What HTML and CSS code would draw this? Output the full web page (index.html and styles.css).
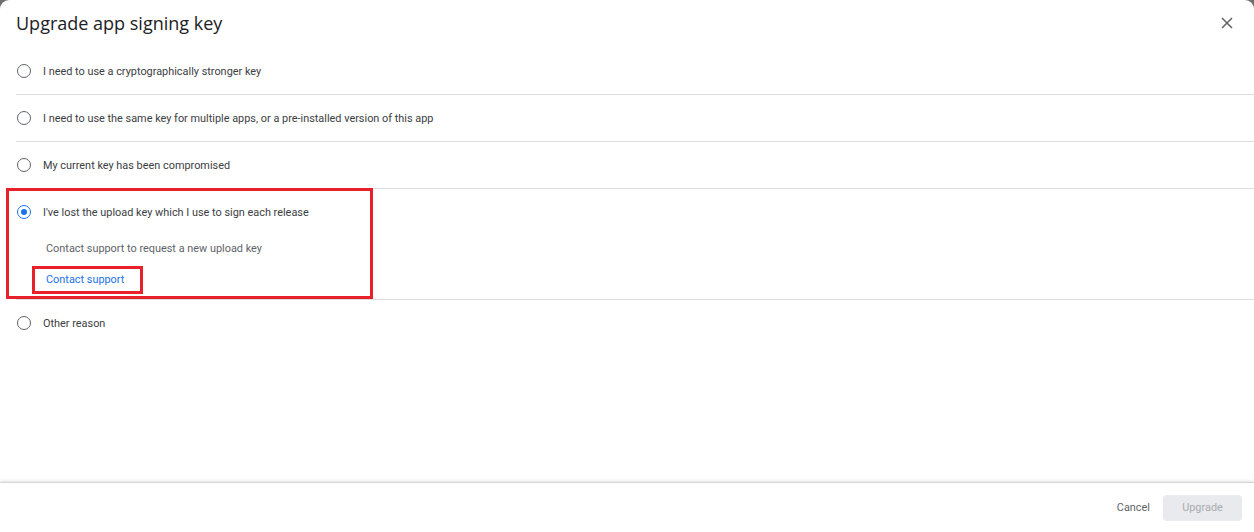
FILE: index.html
```html
<!DOCTYPE html>
<html lang="en">
<head>
    <meta charset="UTF-8">
    <meta name="viewport" content="width=device-width, initial-scale=1.0">
    <title>Upgrade app signing key</title>
    <link rel="stylesheet" href="styles.css">
</head>
<body>
    <div class="dialog">
        <div class="dialog-header">
            <h1 class="dialog-title">Upgrade app signing key</h1>
            <button class="close-btn" aria-label="Close">
                <svg width="12" height="12" viewBox="0 0 12 12">
                    <path d="M1 1 L11 11 M11 1 L1 11" stroke="#5f6368" stroke-width="1.5" fill="none"/>
                </svg>
            </button>
        </div>

        <ul class="options">
            <li class="option">
                <label class="option-row">
                    <span class="radio"></span>
                    <span class="option-label">I need to use a cryptographically stronger key</span>
                </label>
            </li>
            <li class="option">
                <label class="option-row">
                    <span class="radio"></span>
                    <span class="option-label">I need to use the same key for multiple apps, or a pre-installed version of this app</span>
                </label>
            </li>
            <li class="option">
                <label class="option-row">
                    <span class="radio"></span>
                    <span class="option-label">My current key has been compromised</span>
                </label>
            </li>
            <li class="option option-selected">
                <label class="option-row">
                    <span class="radio radio-checked"></span>
                    <span class="option-label">I've lost the upload key which I use to sign each release</span>
                </label>
                <div class="option-detail">
                    <p class="detail-text">Contact support to request a new upload key</p>
                    <a class="detail-link" href="#">Contact support</a>
                </div>
                <!-- annotation boxes -->
                <div class="mark mark-option"></div>
                <div class="mark mark-link"></div>
            </li>
            <li class="option">
                <label class="option-row">
                    <span class="radio"></span>
                    <span class="option-label">Other reason</span>
                </label>
            </li>
        </ul>

        <div class="dialog-footer">
            <button class="btn btn-text">Cancel</button>
            <button class="btn btn-filled" disabled>Upgrade</button>
        </div>
    </div>
</body>
</html>
```

FILE: styles.css
```css
body {
    margin: 0;
    background-color: #6f6f6f;
    font-family: 'Roboto', 'Liberation Sans', sans-serif;
    color: #3c4043;
}
.dialog {
    height: 532px;
    background-color: white;
    border-radius: 9px 9px 0 0;
    display: flex;
    flex-direction: column;
    overflow: hidden;
}
.dialog-header {
    height: 48px;
    display: flex;
    align-items: center;
    justify-content: space-between;
    padding: 0 16px;
}
.dialog-title {
    margin: 0 0 3px;
    font-family: 'Open Sans', 'Roboto', sans-serif;
    font-size: 18px;
    font-weight: 400;
    color: #202124;
}
.close-btn {
    border: none;
    background: none;
    padding: 0;
    width: 12px;
    height: 12px;
    margin: 0 5px 2px 0;
    cursor: pointer;
    display: flex;
}
.options {
    list-style: none;
    margin: 0 0 0 16px;
    padding: 0;
    flex: 1;
}
.option {
    border-bottom: 1px solid #dadce0;
    position: relative;
}
.option:last-child {
    border-bottom: none;
}
.option-row {
    height: 46px;
    display: flex;
    align-items: center;
    gap: 12px;
    font-size: 10.9px;
    cursor: pointer;
}
.radio {
    width: 12px;
    height: 12px;
    border: 1.5px solid #5f6368;
    border-radius: 50%;
    box-sizing: content-box;
    margin-left: 1px;
    display: flex;
    align-items: center;
    justify-content: center;
}
.radio-checked {
    border-color: #1a73e8;
}
.radio-checked::after {
    content: "";
    width: 6px;
    height: 6px;
    border-radius: 50%;
    background-color: #1a73e8;
}
.option-detail {
    padding: 0 0 0 30px;
    height: 64px;
}
.detail-text {
    margin: 0;
    padding-top: 7px;
    font-size: 10.9px;
    color: #5f6368;
}
.detail-link {
    display: inline-block;
    margin-top: 18px;
    font-size: 10.9px;
    color: #1a73e8;
    text-decoration: none;
}
.mark {
    position: absolute;
    border: 3px solid #e8202a;
}
.mark-option {
    left: -10px;
    top: -1px;
    width: 361px;
    height: 105px;
}
.mark-link {
    left: 16px;
    top: 77px;
    width: 105px;
    height: 22px;
}
.dialog-footer {
    height: 50px;
    border-top: 1px solid #d6d6d6;
    box-shadow: 0 -1px 3px rgba(0, 0, 0, 0.12);
    display: flex;
    align-items: center;
    justify-content: flex-end;
    gap: 13px;
    padding: 0 12px 0 0;
    box-sizing: border-box;
    flex-shrink: 0;
}
.btn {
    font-family: 'Roboto', sans-serif;
    font-size: 10.9px;
    border: none;
    background: none;
    padding: 0;
    cursor: pointer;
}
.btn-text {
    color: #5f6368;
}
.btn-filled {
    width: 79px;
    height: 26px;
    border-radius: 4px;
    background-color: #e8eaed;
    color: #a8abaf;
}
```
